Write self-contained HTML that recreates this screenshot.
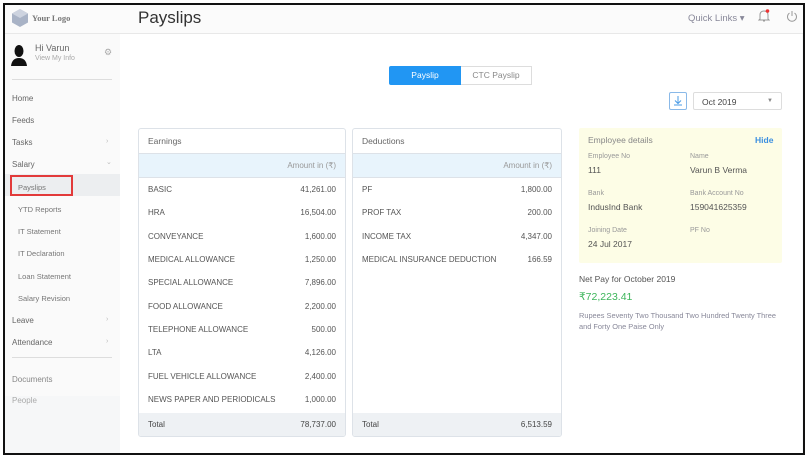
<!DOCTYPE html>
<html><head><meta charset="utf-8"><style>
*{box-sizing:border-box;margin:0;padding:0}
body{width:809px;height:461px;background:#fff;font-family:"Liberation Sans",sans-serif;position:relative;overflow:hidden;color:#555}
.frame{position:absolute;left:3px;top:3px;width:802px;height:452px;border:2px solid #111;background:#f6f7f8;overflow:hidden}
.a{position:absolute}
.side{left:0;top:29px;width:115px;height:362px;background:#fafafa}
.nav{position:absolute;left:7px;font-size:8px;color:#666}
.sub{left:13px;font-size:7.5px;color:#777}
.chev{position:absolute;left:101px;font-size:7px;color:#bbb}
.main{left:115px;top:29px;width:682px;height:424px;background:#fff}
.card{position:absolute;background:#fff;border:1px solid #dde2e8;border-radius:3px;overflow:hidden}
.ch{height:25px;padding:7px 9px;font-size:8.5px;color:#666;border-bottom:1px solid #dde2e8}
.sh{height:24px;background:#e8f4fc;text-align:right;padding:7px 9px;font-size:8px;color:#999;border-bottom:1px solid #dde2e8}
.row{height:23.3px;display:flex;justify-content:space-between;padding:0 9px;align-items:center;font-size:8px;color:#555}
.tot{position:absolute;left:0;right:0;bottom:0;height:23px;background:#eef1f4;display:flex;justify-content:space-between;padding:0 9px;align-items:center;font-size:8px;color:#444}
.lbl{font-size:7px;color:#999;position:absolute}
.val{font-size:8.5px;color:#555;position:absolute}
</style></head><body>
<div class="frame">
<div class="a" style="left:0;top:0;width:800px;height:29px;background:#fbfbfb;border-bottom:1px solid #e8e8e8"></div>
<svg class="a" style="left:5px;top:3px" width="20" height="20" viewBox="0 0 20 20"><polygon points="10,1 18,5.5 18,14.5 10,19 2,14.5 2,5.5" fill="#a9b3c6"/><polygon points="10,1 18,5.5 10,10 2,5.5" fill="#cdd3df"/></svg>
<div class="a" style="left:27px;top:8px;font-family:'Liberation Serif',serif;font-weight:bold;font-size:8.5px;color:#777">Your Logo</div>
<div class="a" style="left:133px;top:3px;font-size:17px;color:#333">Payslips</div>
<div class="a" style="left:683px;top:8px;font-size:9.5px;color:#889">Quick Links ▾</div>
<svg class="a" style="left:753px;top:4px" width="12" height="14" viewBox="0 0 12 14"><path d="M2 10 L2 6 Q2 2 6 2 Q10 2 10 6 L10 10 L11 11 L1 11 Z M5 12 L7 12" stroke="#999" fill="none" stroke-width="1"/><circle cx="9.5" cy="2" r="1.8" fill="#e33"/></svg>
<svg class="a" style="left:781px;top:5px" width="12" height="12" viewBox="0 0 12 12"><path d="M3.5 3 A4.5 4.5 0 1 0 8.5 3 M6 1 L6 6" stroke="#999" fill="none" stroke-width="1"/></svg>

<div class="a side">
<svg class="a" style="left:6px;top:10px" width="16" height="22" viewBox="0 0 16 22"><ellipse cx="8" cy="7" rx="4.5" ry="6" fill="#111"/><path d="M0 22 Q1 14 8 14 Q15 14 16 22 Z" fill="#111"/></svg>
<div class="a" style="left:30px;top:9px;font-size:9px;color:#666">Hi Varun</div>
<div class="a" style="left:30px;top:21px;font-size:7px;color:#aaa">View My Info</div>
<div class="a" style="left:99px;top:13px;font-size:9px;color:#aaa">⚙</div>
<div class="a" style="left:7px;top:45px;width:100px;border-top:1px solid #ddd"></div>
<div class="nav" style="top:60px">Home</div>
<div class="nav" style="top:82px">Feeds</div>
<div class="nav" style="top:104px">Tasks</div><div class="chev" style="top:104px">›</div>
<div class="nav" style="top:126px">Salary</div><div class="chev" style="top:124px">⌄</div>
<div class="a" style="left:0;top:140px;width:115px;height:22px;background:#eceef0"></div>
<div class="a" style="left:5px;top:141px;width:63px;height:21px;border:2px solid #e23a3a"></div>
<div class="nav sub" style="top:149px">Payslips</div>
<div class="nav sub" style="top:171px">YTD Reports</div>
<div class="nav sub" style="top:193px">IT Statement</div>
<div class="nav sub" style="top:215px">IT Declaration</div>
<div class="nav sub" style="top:238px">Loan Statement</div>
<div class="nav sub" style="top:260px">Salary Revision</div>
<div class="nav" style="top:282px">Leave</div><div class="chev" style="top:282px">›</div>
<div class="nav" style="top:304px">Attendance</div><div class="chev" style="top:304px">›</div>
<div class="a" style="left:7px;top:323px;width:100px;border-top:1px solid #ddd"></div>
<div class="nav" style="top:341px;color:#888">Documents</div>
<div class="nav" style="top:362px;color:#aaa">People</div>
</div>

<div class="a main">
<div class="a" style="left:269px;top:32px;width:72px;height:19px;background:#2196f3;border-radius:2px 0 0 2px;color:#fff;font-size:8.5px;text-align:center;line-height:19px">Payslip</div>
<div class="a" style="left:341px;top:32px;width:71px;height:19px;border:1px solid #ddd;border-left:none;color:#888;font-size:8.5px;text-align:center;line-height:17px">CTC Payslip</div>
<div class="a" style="left:549px;top:58px;width:18px;height:18px;border:1px solid #8ab9e8;border-radius:2px"><svg width="16" height="16" viewBox="0 0 16 16"><path d="M8 3 L8 10 M5 7.5 L8 10.5 L11 7.5 M4 12 L12 12" stroke="#4a9be6" fill="none" stroke-width="1"/></svg></div>
<div class="a" style="left:573px;top:58px;width:89px;height:18px;border:1px solid #ddd;border-radius:2px;font-size:8.5px;color:#444;padding:4px 8px">Oct 2019<span style="float:right;color:#888;font-size:6px;margin-top:1px">▼</span></div>

<div class="card" style="left:18px;top:94px;width:208px;height:309px">
<div class="ch">Earnings</div><div class="sh">Amount in (₹)</div>
<div class="row"><span>BASIC</span><span>41,261.00</span></div>
<div class="row"><span>HRA</span><span>16,504.00</span></div>
<div class="row"><span>CONVEYANCE</span><span>1,600.00</span></div>
<div class="row"><span>MEDICAL ALLOWANCE</span><span>1,250.00</span></div>
<div class="row"><span>SPECIAL ALLOWANCE</span><span>7,896.00</span></div>
<div class="row"><span>FOOD ALLOWANCE</span><span>2,200.00</span></div>
<div class="row"><span>TELEPHONE ALLOWANCE</span><span>500.00</span></div>
<div class="row"><span>LTA</span><span>4,126.00</span></div>
<div class="row"><span>FUEL VEHICLE ALLOWANCE</span><span>2,400.00</span></div>
<div class="row"><span>NEWS PAPER AND PERIODICALS</span><span>1,000.00</span></div>
<div class="tot"><span>Total</span><span>78,737.00</span></div>
</div>

<div class="card" style="left:232px;top:94px;width:210px;height:309px">
<div class="ch">Deductions</div><div class="sh">Amount in (₹)</div>
<div class="row"><span>PF</span><span>1,800.00</span></div>
<div class="row"><span>PROF TAX</span><span>200.00</span></div>
<div class="row"><span>INCOME TAX</span><span>4,347.00</span></div>
<div class="row"><span>MEDICAL INSURANCE DEDUCTION</span><span>166.59</span></div>
<div class="tot"><span>Total</span><span>6,513.59</span></div>
</div>

<div class="a" style="left:459px;top:94px;width:203px;height:135px;background:#fdfde6;border-radius:2px">
<div class="a" style="left:9px;top:7px;font-size:8.5px;color:#888">Employee details</div>
<div class="a" style="left:176px;top:7px;font-size:8.5px;color:#3b8fe0;font-weight:bold">Hide</div>
<div class="lbl" style="left:9px;top:25px">Employee No</div><div class="val" style="left:9px;top:37px">111</div>
<div class="lbl" style="left:111px;top:25px">Name</div><div class="val" style="left:111px;top:37px">Varun B Verma</div>
<div class="lbl" style="left:9px;top:62px">Bank</div><div class="val" style="left:9px;top:74px">IndusInd Bank</div>
<div class="lbl" style="left:111px;top:62px">Bank Account No</div><div class="val" style="left:111px;top:74px">159041625359</div>
<div class="lbl" style="left:9px;top:99px">Joining Date</div><div class="val" style="left:9px;top:111px">24 Jul 2017</div>
<div class="lbl" style="left:111px;top:99px">PF No</div>
</div>
<div class="a" style="left:459px;top:240px;font-size:8.5px;color:#555">Net Pay for October 2019</div>
<div class="a" style="left:459px;top:257px;font-size:10.5px;color:#3cb55a">₹72,223.41</div>
<div class="a" style="left:459px;top:276px;width:205px;font-size:7.4px;line-height:11px;color:#889">Rupees Seventy Two Thousand Two Hundred Twenty Three and Forty One Paise Only</div>
</div>
</div>
</body></html>
